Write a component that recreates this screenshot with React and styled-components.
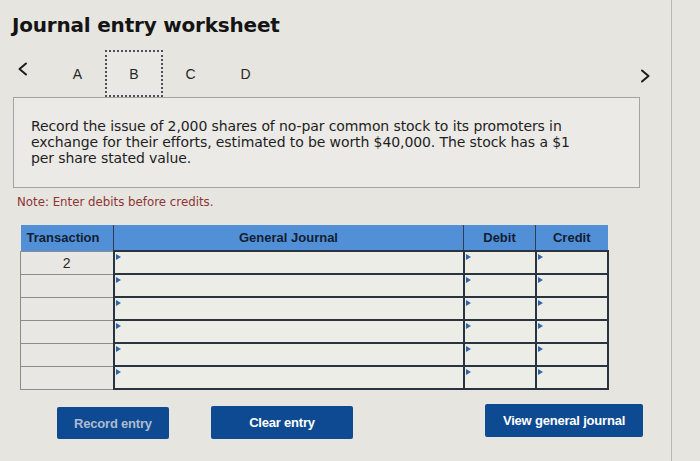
import React from "react";
import styled, { createGlobalStyle } from "styled-components";

const Global = createGlobalStyle`
  html, body { margin: 0; padding: 0; background: #e6e5e0; }
  body { font-family: "DejaVu Sans", Verdana, sans-serif; }
`;

const Page = styled.div`
  width: 672px;
  min-height: 461px;
  box-sizing: border-box;
  border-right: 1px solid #b9b8b2;
  padding: 13px 16px 0 12px;
  display: flex;
  flex-direction: column;
`;

const Title = styled.h1`
  margin: 0;
  font-family: "DejaVu Sans", Verdana, sans-serif;
  font-weight: 700;
  font-size: 20px;
  line-height: 24px;
  color: #141414;
  letter-spacing: -0.2px;
`;

const TabRow = styled.div`
  display: flex;
  align-items: stretch;
  height: 47px;
  margin-top: 13px;
`;

const Arrow = styled.div`
  width: 38px;
  display: flex;
  align-items: flex-start;
  box-sizing: border-box;
  margin-left: ${(p) => (p.$right ? "auto" : "0")};
  justify-content: ${(p) => (p.$right ? "flex-end" : "flex-start")};
  padding: ${(p) => (p.$right ? "19px 4px 0 0" : "12px 0 0 5px")};
  color: #1c1c1c;
`;

const Tab = styled.div`
  width: ${(p) => (p.$active ? "58px" : "55px")};
  box-sizing: border-box;
  display: flex;
  align-items: center;
  justify-content: center;
  font-family: "Liberation Sans", Arial, sans-serif;
  font-size: 14px;
  color: #262626;
  border: ${(p) => (p.$active ? "2px dotted #4a4f5a" : "2px solid transparent")};
  background: ${(p) => (p.$active ? "#e9e8e4" : "transparent")};
`;

const Question = styled.div`
  margin-left: 1px;
  width: 627px;
  height: 91px;
  box-sizing: border-box;
  border: 1px solid #a4a39e;
  background: #ebeae6;
  padding: 20px 55px 0 17px;
  font-family: "DejaVu Sans", Verdana, sans-serif;
  font-size: 14px;
  letter-spacing: -0.1px;
  line-height: 16px;
  color: #1e1e1e;
`;

const Note = styled.div`
  margin: 7px 0 0 5px;
  font-family: "DejaVu Sans", Verdana, sans-serif;
  font-size: 11.8px;
  line-height: 14px;
  color: #8e3434;
`;

const Table = styled.table`
  margin: 16px 0 0 8px;
  border-collapse: collapse;
  table-layout: fixed;
  width: 587px;
`;

const Th = styled.th`
  height: 25px;
  padding: 0 6px;
  background: #5190d6;
  border-left: 1px solid #2d3d52;
  border-right: 1px solid #2d3d52;
  font-family: "Liberation Sans", Arial, sans-serif;
  font-weight: 700;
  font-size: 13px;
  color: #132033;
  text-align: ${(p) => p.$align || "center"};
  &:first-child { border-left: none; }
  &:last-child { border-right: none; }
`;

const TxCell = styled.td`
  height: 21px;
  padding: 0;
  border: 1px solid #8d8c88;
  background: #e8e7e3;
  text-align: center;
  font-family: "Liberation Sans", Arial, sans-serif;
  font-size: 14px;
  color: #2a2a2a;
`;

const InputCell = styled.td`
  position: relative;
  height: 21px;
  padding: 0;
  border: 2px solid #2a3340;
  background: #edede8;
  &::before {
    content: "";
    position: absolute;
    left: 1px;
    top: 2px;
    border-left: 5px solid #2f66a8;
    border-top: 3px solid transparent;
    border-bottom: 3px solid transparent;
  }
`;

const ButtonRow = styled.div`
  display: flex;
  align-items: flex-start;
  margin-top: 14px;
`;

const Button = styled.button`
  width: ${(p) => p.$w}px;
  height: ${(p) => p.$h || 32}px;
  margin-left: ${(p) => p.$ml}px;
  margin-top: ${(p) => p.$mt || 0}px;
  border: none;
  border-radius: 2px;
  background: #0d4a91;
  color: ${(p) => (p.$disabled ? "#aebbd0" : "#ffffff")};
  font-family: "Liberation Sans", Arial, sans-serif;
  font-weight: 700;
  font-size: 13px;
  letter-spacing: -0.2px;
  cursor: pointer;
`;

const Chevron = ({ dir }) => (
  <svg width="11" height="14" viewBox="0 0 11 14" fill="none">
    <path
      d={dir === "left" ? "M9 1.5 L2.5 7 L9 12.5" : "M2 1.5 L8.5 7 L2 12.5"}
      stroke="currentColor"
      strokeWidth="2"
      strokeLinecap="round"
      strokeLinejoin="round"
    />
  </svg>
);

const rows = ["2", "", "", "", "", ""];

export default function App() {
  return (
    <>
      <Global />
      <Page>
        <Title>Journal entry worksheet</Title>
        <TabRow>
          <Arrow><Chevron dir="left" /></Arrow>
          <Tab>A</Tab>
          <Tab $active>B</Tab>
          <Tab>C</Tab>
          <Tab>D</Tab>
          <Arrow $right><Chevron dir="right" /></Arrow>
        </TabRow>
        <Question>
          Record the issue of 2,000 shares of no-par common stock to its promoters in
          exchange for their efforts, estimated to be worth $40,000. The stock has a $1
          per share stated value.
        </Question>
        <Note>Note: Enter debits before credits.</Note>
        <Table>
          <colgroup>
            <col style={{ width: 93 }} />
            <col style={{ width: 350 }} />
            <col style={{ width: 72 }} />
            <col style={{ width: 72 }} />
          </colgroup>
          <thead>
            <tr>
              <Th $align="left">Transaction</Th>
              <Th>General Journal</Th>
              <Th>Debit</Th>
              <Th>Credit</Th>
            </tr>
          </thead>
          <tbody>
            {rows.map((t, i) => (
              <tr key={i}>
                <TxCell>{t}</TxCell>
                <InputCell />
                <InputCell />
                <InputCell />
              </tr>
            ))}
          </tbody>
        </Table>
        <ButtonRow>
          <Button $disabled $w={112} $ml={45} $mt={3}>Record entry</Button>
          <Button $w={142} $ml={42} $mt={2} $h={33}>Clear entry</Button>
          <Button $w={158} $ml={132} $h={33}>View general journal</Button>
        </ButtonRow>
      </Page>
    </>
  );
}
